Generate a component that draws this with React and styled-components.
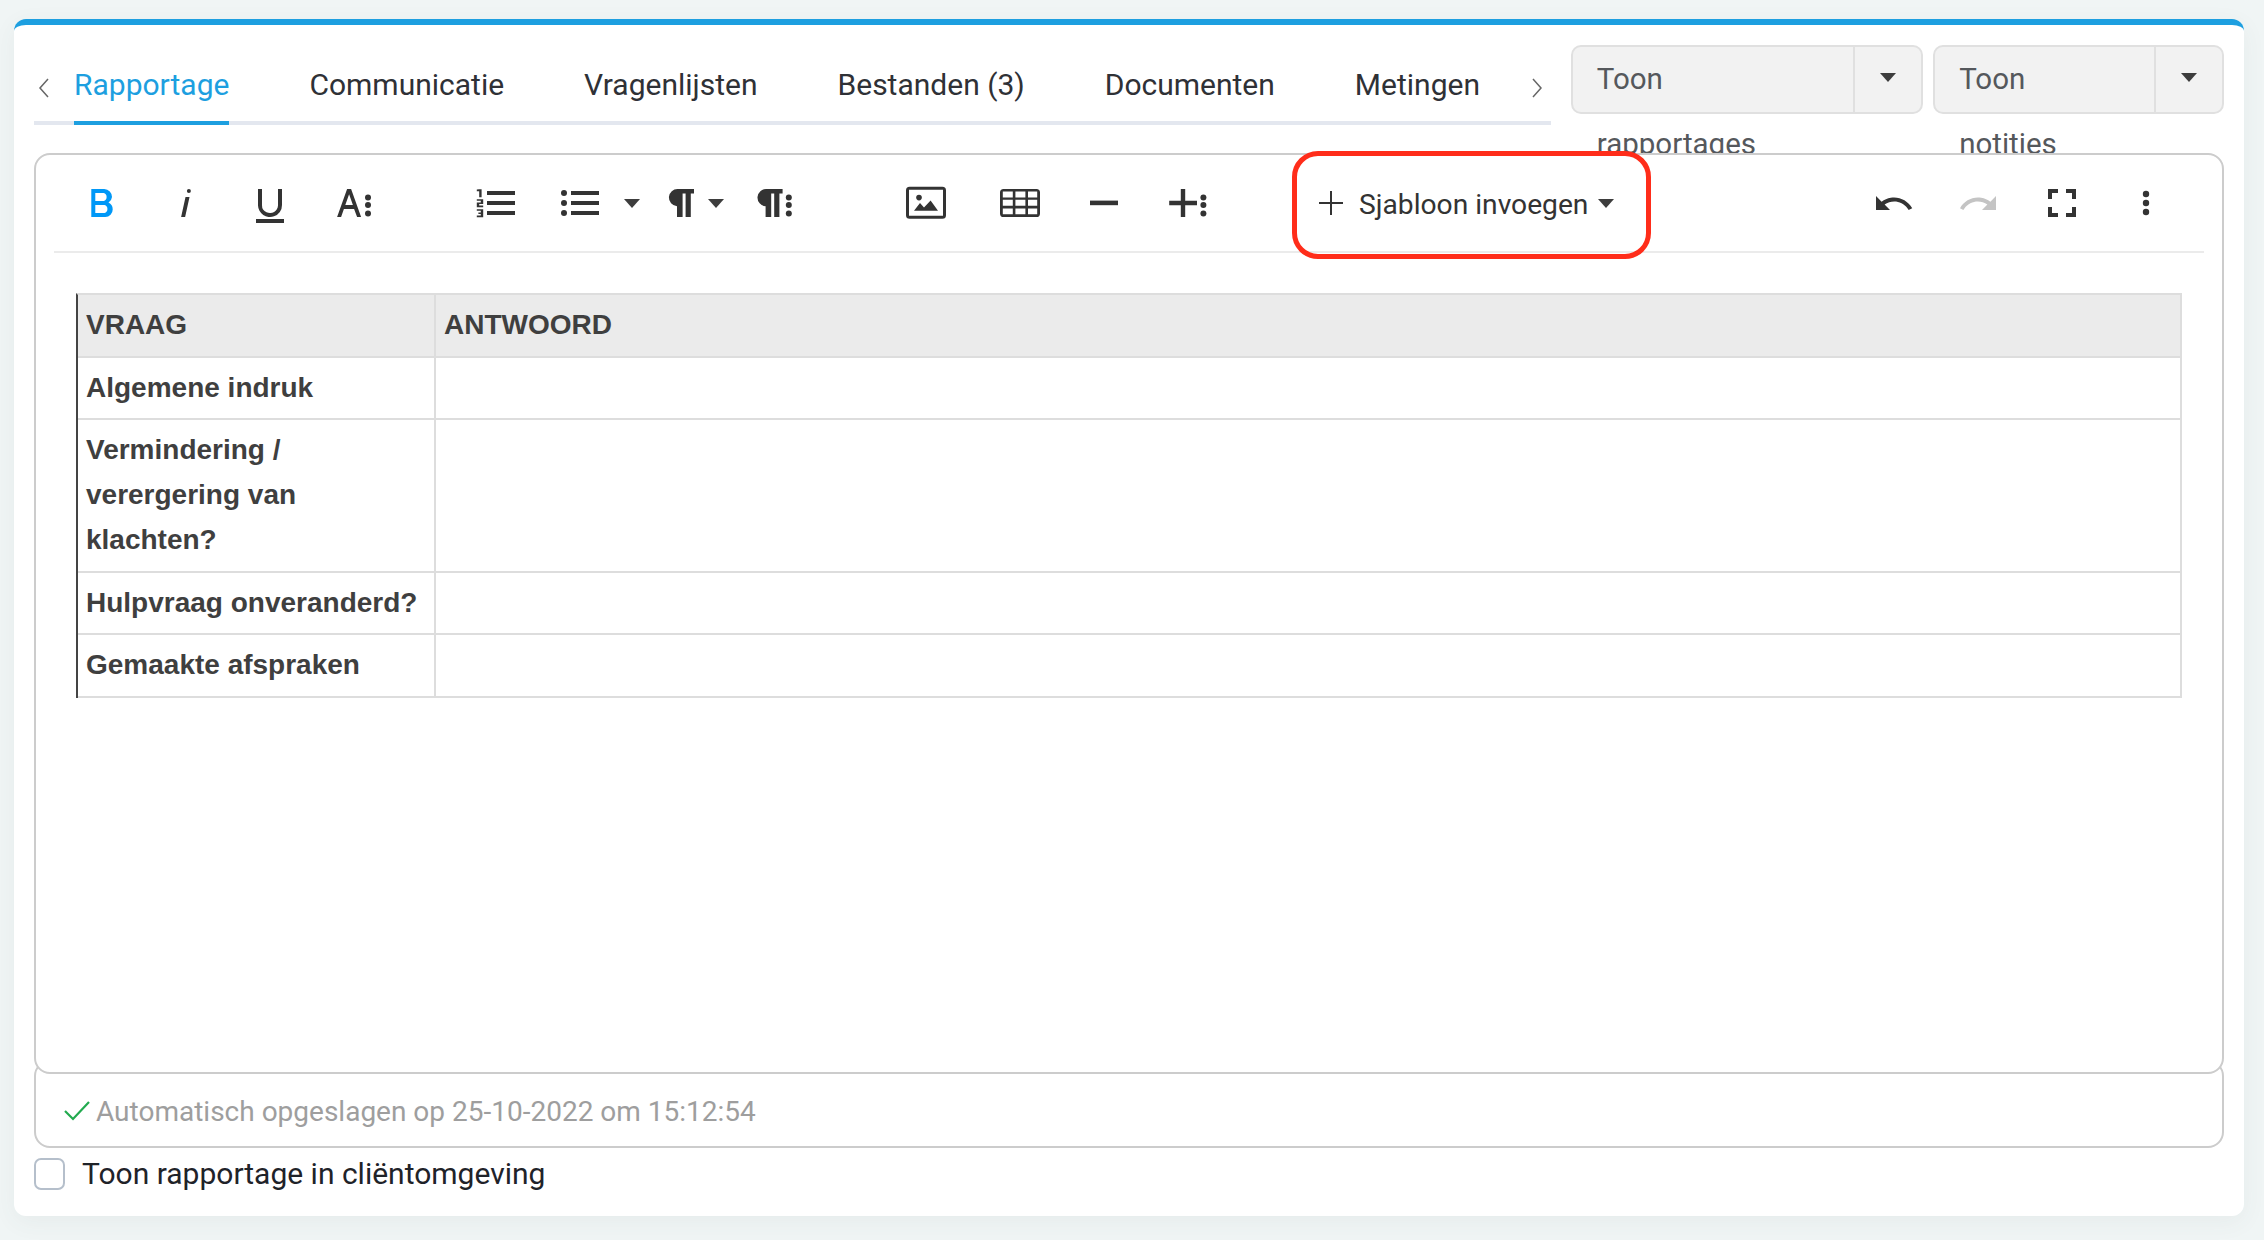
import React from "react";
import styled, { createGlobalStyle } from "styled-components";

const GlobalStyle = createGlobalStyle`
  html, body {
    margin: 0;
    height: 100%;
    overflow: hidden;
    background-color: #f0f5f5;
  }
  * {
    box-sizing: border-box;
  }
`;

const Card = styled.div`
  width: 2230px;
  height: 1197px;
  margin: 19px 0 0 14px;
  padding: 20px 20px 0;
  background-color: #fff;
  border-top: 6px solid #1d9fe0;
  border-radius: 12px;
  box-shadow: 0 6px 24px rgba(60, 80, 80, 0.06);
  font-family: Roboto, "Liberation Sans", sans-serif;
`;

const Header = styled.div`
  display: flex;
  align-items: flex-start;
`;

const TabNav = styled.nav`
  display: flex;
  align-items: flex-start;
  width: 1518px;
  height: 80px;
  margin-right: 20px;
  box-shadow: inset 0 -4px 0 #e3e7ef;
`;

const Chevron = styled.span`
  display: flex;
  align-items: center;
  width: ${(props) => props.$width}px;
  height: 76px;
  padding: 10px 0 0 ${(props) => props.$inset}px;
  margin-left: ${(props) => (props.$end ? "auto" : "0")};
`;

const TabList = styled.div`
  display: flex;
  gap: 80px;
`;

const Tab = styled.a`
  display: block;
  height: 80px;
  padding-top: 4px;
  line-height: 72px;
  font-size: 30px;
  color: ${(props) => (props.$active ? "#1d9fe0" : "#2f3136")};
  border-bottom: 4px solid ${(props) => (props.$active ? "#1d9fe0" : "transparent")};
`;

const SplitButton = styled.div`
  display: flex;
  height: 69px;
  margin-right: 10px;
  background-color: #f2f2f2;
  border: 2px solid #e0e0e0;
  border-radius: 10px;
  color: #55585c;
  font-size: 29.5px;
  &:last-child {
    margin-right: 0;
  }
`;

const SplitLabel = styled.span`
  padding: 0 24px;
  line-height: 65px;
  border-right: 2px solid #e0e0e0;
`;

const SplitCaret = styled.span`
  display: flex;
  align-items: center;
  justify-content: center;
  width: 66px;
  padding-bottom: 4px;
`;

const Caret = styled.span`
  display: block;
  flex: none;
  margin-left: ${(props) => props.$gap || 0}px;
  border-style: solid;
  border-width: 9px 8px 0;
  border-color: #3d3d3d transparent transparent;
`;

const Editor = styled.div`
  position: relative;
  z-index: 1;
  height: 921px;
  margin-top: 28px;
  background-color: #fff;
  border: 2px solid #ccc;
  border-radius: 16px;
`;

const Toolbar = styled.div`
  display: flex;
  align-items: center;
  height: 98px;
  margin: 0 18px;
  padding: 0 16px 0 6px;
  border-bottom: 2px solid #ebebeb;
`;

const ToolButton = styled.button`
  display: flex;
  align-items: center;
  justify-content: center;
  flex: none;
  width: ${(props) => props.$width || 84}px;
  height: 96px;
  margin-left: ${(props) => props.$gap || 0}px;
  padding: 0;
  background: none;
  border: 0;
  color: ${(props) => props.$color || "#333"};
`;

const Glyph = styled.svg`
  display: block;
  width: 48px;
  height: 48px;
  fill: currentColor;
`;

const TemplateButton = styled.button`
  position: relative;
  display: flex;
  align-items: center;
  flex: none;
  width: 351px;
  height: 96px;
  margin-left: 66px;
  margin-right: auto;
  padding: 0 0 0 23px;
  background: none;
  border: 0;
  color: #333;
  font-family: inherit;
  font-size: 28.2px;
`;

const TemplateLabel = styled.span`
  margin-left: 16px;
  padding-top: 3px;
`;

const Highlight = styled.span`
  position: absolute;
  top: -4px;
  right: -4px;
  bottom: -8px;
  left: -4px;
  border: 5px solid #ff2d1a;
  border-radius: 26px;
`;

const Body = styled.div`
  padding: 40px 40px 0;
`;

const QuestionTable = styled.table`
  width: 2106px;
  border-spacing: 0;
  border-collapse: separate;
  border-top: 2px solid #ddd;
  border-left: 2px solid #444;
  font-family: "Liberation Sans", Arial, sans-serif;
  font-size: 28px;
  font-weight: 700;
  line-height: 44.7px;
  color: #3f3f3f;
`;

const Cell = styled.td`
  width: ${(props) => props.$width || "auto"};
  padding: 8px;
  text-align: left;
  background-color: ${(props) => (props.$head ? "#ebebeb" : "#fff")};
  border-right: 2px solid #ddd;
  border-bottom: 2px solid #ddd;
`;

const Footer = styled.div`
  display: flex;
  align-items: center;
  gap: 6px;
  height: 88px;
  margin-top: -14px;
  padding: 14px 0 0 28px;
  border: 2px solid #ccc;
  border-radius: 16px;
  color: #9e9e9e;
  font-size: 28px;
`;

const CheckRow = styled.label`
  display: flex;
  align-items: center;
  gap: 17px;
  margin-top: 8px;
  color: #1f2329;
  font-size: 30px;
`;

const CheckBox = styled.span`
  display: block;
  width: 31px;
  height: 32px;
  background-color: #fff;
  border: 2px solid #b5bfcb;
  border-radius: 7px;
`;

const TABS = ["Rapportage", "Communicatie", "Vragenlijsten", "Bestanden (3)", "Documenten", "Metingen"];

const ROWS = [
  ["Algemene indruk"],
  ["Vermindering /", "verergering van", "klachten?"],
  ["Hulpvraag onveranderd?"],
  ["Gemaakte afspraken"],
];

const Dots = ({ cx }) => (
  <>
    <circle cx={cx} cy="9.2" r="1.5" />
    <circle cx={cx} cy="13" r="1.5" />
    <circle cx={cx} cy="17.200" r="1.5" />
  </>
);

const ChevronIcon = ({ points }) => (
  <svg width="12" height="20" viewBox="0 0 12 20" fill="none" stroke="#666" strokeWidth="1.5">
    <polyline points={points} />
  </svg>
);

const Icon = ({ children }) => <Glyph viewBox="0 0 24 24">{children}</Glyph>;

const Rapport = () => (
  <Card>
    <Header>
      <TabNav>
        <Chevron $width={40} $inset={4}>
          <ChevronIcon points="10,1 2,10 10,19" />
        </Chevron>
        <TabList>
          {TABS.map((tab, i) => (
            <Tab key={tab} $active={i === 0}>
              {tab}
            </Tab>
          ))}
        </TabList>
        <Chevron $end $width={22} $inset={2}>
          <ChevronIcon points="2,1 10,10 2,19" />
        </Chevron>
      </TabNav>
      <SplitButton>
        <SplitLabel>Toon rapportages</SplitLabel>
        <SplitCaret>
          <Caret />
        </SplitCaret>
      </SplitButton>
      <SplitButton>
        <SplitLabel>Toon notities</SplitLabel>
        <SplitCaret>
          <Caret />
        </SplitCaret>
      </SplitButton>
    </Header>

    <Editor>
      <Toolbar>
        <ToolButton $color="#0098f7">
          <Icon>
            <path d="M15.25,11.8A3.68,3.68,0,0,0,17,9a3.93,3.93,0,0,0-3.86-4H6.65V19h7a3.74,3.74,0,0,0,3.7-3.78V15.1A3.64,3.64,0,0,0,15.25,11.8ZM8.65,7h4.2a2.1,2.1,0,0,1,0,4H8.65Zm4.6,10H8.65V13h4.6a2.1,2.1,0,0,1,0,4Z" />
          </Icon>
        </ToolButton>
        <ToolButton>
          <Icon>
            <path d="M11.76,9h2l-2.2,10h-2Zm1.68-4a1,1,0,1,0,1,1,1,1,0,0,0-1-1Z" />
          </Icon>
        </ToolButton>
        <ToolButton>
          <Icon>
            <path d="M19,20v2H5V20Zm-3-6.785a4,4,0,0,1-5.74,3.4A3.75,3.75,0,0,1,8,13.085V5.005H6v8.21a6,6,0,0,0,8,5.44,5.851,5.851,0,0,0,4-5.65v-8H16Z" />
          </Icon>
        </ToolButton>
        <ToolButton>
          <Icon>
            <path d="M13.55,19h2l-5-14h-2l-5,14h2l1.4-4h5.1Zm-5.9-6,1.9-5.4,1.9,5.4Z" />
            <Dots cx="19" />
          </Icon>
        </ToolButton>

        <ToolButton $gap={58}>
          <Icon>
            <path d="M7.5 6h14v2h-14zM7.5 11h14v2h-14zM7.5 16h14v2h-14z" />
            <path d="M3.6 5.100h1.200v4H3.600V6.100H2.400v-.8zM2.400 10.100h3.200v2.400H3.600v.8h2v.8H2.400v-2.400h2v-.8h-2zM2.400 15.100h3.200v4H2.400v-.8h2v-.8H3.200v-.8h1.200v-.8h-2z" />
          </Icon>
        </ToolButton>
        <ToolButton>
          <Icon>
            <circle cx="4" cy="7" r="1.5" />
            <circle cx="4" cy="12" r="1.5" />
            <circle cx="4" cy="17" r="1.5" />
            <path d="M7.5 6h14v2h-14zM7.5 11h14v2h-14zM7.5 16h14v2h-14z" />
          </Icon>
        </ToolButton>
        <Caret $gap={2} />
        <ToolButton $gap={18} $width={48}>
          <Icon>
            <path d="M18 5H10a4.300 4.300 0 0 0-.5 8.600V19h2.800V7.300h1.500V19h2.600V7.300H18z" />
          </Icon>
        </ToolButton>
        <Caret $gap={2} />
        <ToolButton $gap={9}>
          <Icon>
            <path d="M15.800 5H7.800a4.300 4.300 0 0 0-.5 8.600V19h2.800V7.300h1.500V19h2.600V7.300h1.600z" />
            <Dots cx="18.900" />
          </Icon>
        </ToolButton>

        <ToolButton $gap={67}>
          <Icon>
            <path
              fillRule="evenodd"
              d="M3.800 3.900h16.400A1.800 1.800 0 0 1 22 5.700v12.400a1.800 1.800 0 0 1-1.800 1.800H3.800A1.800 1.800 0 0 1 2 18.100V5.700a1.800 1.800 0 0 1 1.800-1.800zM3.500 5.400v13h17v-13z"
            />
            <circle cx="8.500" cy="9.300" r="1.400" />
            <path d="M6 15.900l3-3.900 2 2.300 3.300-3.500 3.700 5.100z" />
          </Icon>
        </ToolButton>
        <ToolButton $gap={10}>
          <Icon>
            <path
              fillRule="evenodd"
              d="M3.800 5h16.400A1.800 1.800 0 0 1 22 6.800v10.400a1.800 1.800 0 0 1-1.800 1.800H3.800A1.800 1.800 0 0 1 2 17.200V6.800A1.800 1.800 0 0 1 3.800 5zM3.400 6.300v2.900h5v-2.900zM9.700 6.300v2.900h5v-2.900zM16 6.300v2.900h4.600v-2.900zM3.400 10.400v3h5v-3zM9.700 10.400v3h5v-3zM16 10.400v3h4.600v-3zM3.400 14.700v2.900h5v-2.900zM9.700 14.700v2.900h5v-2.900zM16 14.700v2.900h4.600v-2.900z"
            />
          </Icon>
        </ToolButton>
        <ToolButton>
          <Icon>
            <path d="M5 10.800h14v2.300H5z" />
          </Icon>
        </ToolButton>
        <ToolButton>
          <Icon>
            <path d="M8.400 5h2.200v5.900h5.900v2.200h-5.900V19H8.400v-5.900H2.600v-2.200h5.800z" />
            <Dots cx="19.700" />
          </Icon>
        </ToolButton>

        <TemplateButton>
          <svg width="24" height="24" viewBox="0 0 24 24" fill="none" stroke="#333" strokeWidth="2">
            <path d="M12 0v24M0 12h24" />
          </svg>
          <TemplateLabel>Sjabloon invoegen</TemplateLabel>
          <Caret $gap={10} />
          <Highlight />
        </TemplateButton>

        <ToolButton>
          <Icon>
            <path d="M10.400,9.400c-1.700,0.300-3.200,0.900-4.600,2L3,8.500v7h7l-2.700-2.700c3.700-2.600,8.800-1.800,11.500,1.900c0.200,0.300,0.400,0.500,0.500,0.800l1.800-0.900C18.900,10.800,14.700,8.700,10.400,9.400z" />
          </Icon>
        </ToolButton>
        <ToolButton $color="#c4c4c4">
          <Icon>
            <path d="M13.600,9.400c1.700,0.300,3.200,0.900,4.600,2L21,8.500v7h-7l2.700-2.700C13,10.200,7.900,11,5.200,14.700c-0.200,0.300-0.400,0.500-0.500,0.800L3,14.600C5.100,10.800,9.300,8.700,13.600,9.400z" />
          </Icon>
        </ToolButton>
        <ToolButton>
          <Icon>
            <path d="M5 5h5v2H7v3H5zM14 5h5v5h-2V7h-3zM5 14h2v3h3v2H5zM17 14h2v5h-5v-2h3z" />
          </Icon>
        </ToolButton>
        <ToolButton>
          <Icon>
            <circle cx="12" cy="7.500" r="1.600" />
            <circle cx="12" cy="12" r="1.600" />
            <circle cx="12" cy="16.500" r="1.600" />
          </Icon>
        </ToolButton>
      </Toolbar>

      <Body>
        <QuestionTable>
          <tbody>
            <tr>
              <Cell $head $width="358px">VRAAG</Cell>
              <Cell $head>ANTWOORD</Cell>
            </tr>
            {ROWS.map((lines) => (
              <tr key={lines[0]}>
                <Cell>
                  {lines.map((line) => (
                    <div key={line}>{line}</div>
                  ))}
                </Cell>
                <Cell />
              </tr>
            ))}
          </tbody>
        </QuestionTable>
      </Body>
    </Editor>

    <Footer>
      <svg width="26" height="20" viewBox="0 0 26 20" fill="none" stroke="#22aa4f" strokeWidth="2.200">
        <polyline points="1,10 9,18 25,1" />
      </svg>
      <span>Automatisch opgeslagen op 25-10-2022 om 15:12:54</span>
    </Footer>

    <CheckRow>
      <CheckBox />
      Toon rapportage in cliëntomgeving
    </CheckRow>
  </Card>
);

const App = () => (
  <>
    <GlobalStyle />
    <Rapport />
  </>
);

export default App;
